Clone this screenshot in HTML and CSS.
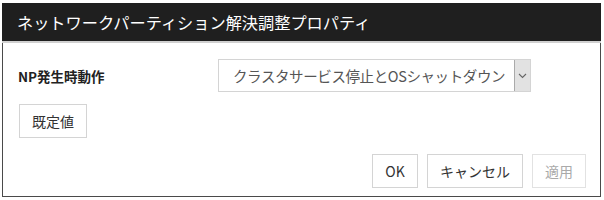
FILE: index.html
```html
<!DOCTYPE html>
<html lang="ja">
<head>
    <meta charset="utf-8">
    <link rel="stylesheet" href="styles.css">
</head>
<body>
    <div class="dialog">
        <div class="dialog-header">ネットワークパーティション解決調整プロパティ</div>

        <div class="dialog-body">
            <div class="form-row">
                <label class="form-label">NP発生時動作</label>
                <div class="select-box">
                    <span class="select-text">クラスタサービス停止とOSシャットダウン</span>
                    <span class="select-arrow">
                        <svg width="9" height="6" viewBox="0 0 9 6"><path d="M1 1 L4.5 4.5 L8 1" fill="none" stroke="#666" stroke-width="1.1"/></svg>
                    </span>
                </div>
            </div>

            <button class="btn btn-default">既定値</button>

            <div class="dialog-footer">
                <button class="btn btn-ok">OK</button>
                <button class="btn btn-cancel">キャンセル</button>
                <button class="btn btn-apply" disabled>適用</button>
            </div>
        </div>
    </div>
</body>
</html>
```

FILE: styles.css
```css
body {
    margin: 0;
    background-color: #fff;
    font-family: "Noto Sans CJK JP", "Noto Sans", sans-serif;
    color: #333;
}

.dialog {
    margin: 3px 0 0 2px;
    width: 597px;
    height: 193px;
    border: 1px solid #4a4a4a;
    border-top: none;
    background-color: #fff;
    display: flex;
    flex-direction: column;
}

.dialog-header {
    background-color: #1f1f1f;
    color: #fff;
    font-size: 16.2px;
    height: 38px;
    line-height: 38px;
    padding-left: 15px;
    border-bottom: 2px solid #d0d0d0;
    margin: 0 -1px;
}

.dialog-body {
    padding: 16px 14px 0 15px;
}

    .form-row {
        display: flex;
        align-items: center;
    }

        .form-label {
            width: 200px;
            font-size: 13.5px;
            font-weight: bold;
            color: #222;
        }

    .select-box {
        width: 311px;
        height: 31px;
        border: 1px solid #d4d4d4;
        display: flex;
        align-items: center;
        justify-content: space-between;
    }

        .select-text {
            padding-left: 14px;
            font-size: 14.5px;
            letter-spacing: -0.4px;
            white-space: nowrap;
            color: #555;
        }

        .select-arrow {
            width: 15px;
            height: 31px;
            background-color: #e2e2e2;
            border-left: 1px solid #aaa;
            display: flex;
            align-items: center;
            justify-content: center;
        }

.btn {
    font-family: inherit;
    font-size: 14px;
    color: #333;
    background-color: #fff;
    border: 1px solid #d4d4d4;
    height: 34px;
    padding: 0;
    cursor: pointer;
}

.btn-default {
    margin-top: 12px;
    margin-left: 1px;
    width: 68px;
}

.dialog-footer {
    margin-top: 16px;
    display: flex;
    justify-content: flex-end;
    gap: 9px;
}

    .btn-ok {
        width: 46px;
    }

    .btn-cancel {
        width: 96px;
    }

    .btn-apply {
        width: 54px;
        color: #aaa;
        border-color: #e2e2e2;
        cursor: default;
    }
```
